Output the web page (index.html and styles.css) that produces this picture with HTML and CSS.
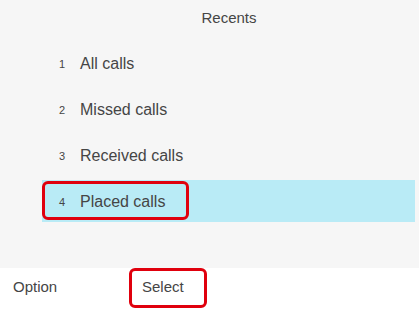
FILE: index.html
```html
<!DOCTYPE html>
<html>
<head>
  <title>Recents</title>
  <link rel="stylesheet" href="styles.css">
</head>
<body>
  <div class="screen">
    <div class="main">
      <div class="title">Recents</div>
      <ul class="menu">
        <li class="menu-item"><span class="num">1</span><span class="label">All calls</span></li>
        <li class="menu-item"><span class="num">2</span><span class="label">Missed calls</span></li>
        <li class="menu-item"><span class="num">3</span><span class="label">Received calls</span></li>
        <li class="menu-item selected">
          <span class="num">4</span><span class="label">Placed calls</span>
          <span class="callout"></span>
        </li>
      </ul>
    </div>
    <div class="softkeys">
      <div class="softkey">Option</div>
      <div class="softkey marked">Select</div>
    </div>
  </div>
</body>
</html>
```

FILE: styles.css
```css
body {
  margin: 0;
  font-family: "Liberation Sans", Arial, sans-serif;
  color: #454545;
  background: #fff;
}

.screen {
  width: 419px;
  height: 309px;
  display: flex;
  flex-direction: column;
}

.main {
  height: 268px;
  background: #f6f6f6;
}

.title {
  height: 34px;
  line-height: 36px;
  text-align: center;
  font-size: 15px;
  padding-left: 39px;
}

.menu {
  list-style: none;
  margin: 8px 4px 0 42px;
  padding: 0;
  display: flex;
  flex-direction: column;
  gap: 4px;
}

.menu-item {
  position: relative;
  box-sizing: border-box;
  height: 42px;
  display: flex;
  align-items: center;
  padding: 2px 0 0 17px;
}

.menu-item .num {
  width: 21px;
  font-size: 11px;
}

.menu-item .label {
  font-size: 16px;
}

.menu-item.selected {
  background: #b9ebf6;
}

.callout {
  position: absolute;
  left: 0;
  top: 1px;
  width: 141px;
  height: 33px;
  border: 3px solid #e0000d;
  border-radius: 6px;
}

.softkeys {
  flex: 1;
  display: flex;
  align-items: flex-start;
}

.softkey {
  font-size: 15px;
  height: 41px;
  line-height: 37px;
}

.softkeys .softkey:first-child {
  width: 116px;
  padding-left: 13px;
}

.softkey.marked {
  box-sizing: border-box;
  width: 78px;
  height: 40px;
  line-height: 31px;
  padding-left: 10px;
  border: 3px solid #e0000d;
  border-radius: 6px;
}
```
